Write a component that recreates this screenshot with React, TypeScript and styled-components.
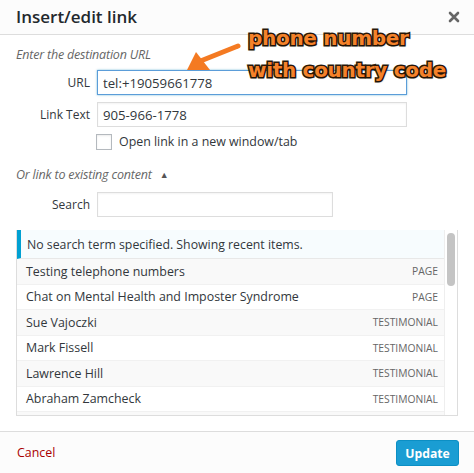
import styled, { createGlobalStyle } from "styled-components";

const GlobalStyle = createGlobalStyle`
  html, body {
    margin: 0;
    padding: 0;
    background: #fff;
  }
  body {
    font-family: "Open Sans", "Liberation Sans", sans-serif;
    color: #32373c;
  }
  * {
    box-sizing: border-box;
  }
`;

const Dialog = styled.div`
  position: relative;
  width: 474px;
  height: 473px;
  display: flex;
  flex-direction: column;
  background: #fff;
  overflow: hidden;
`;

const Header = styled.div`
  height: 35px;
  flex: none;
  display: flex;
  align-items: center;
  justify-content: space-between;
  padding: 0 14px 0 16px;
  background: #fcfcfc;
  border-bottom: 1px solid #dddddd;
`;

const Title = styled.h1`
  margin: 0;
  font-size: 17px;
  font-weight: 600;
  color: #23282d;
  line-height: 34px;
`;

const CloseButton = styled.button`
  border: 0;
  background: none;
  padding: 0;
  width: 12px;
  height: 12px;
  display: flex;
  color: #666;
`;

const Body = styled.div`
  flex: 1;
  padding: 11px 16px 0;
`;

const Hint = styled.p`
  margin: 0 0 6px;
  font-size: 12.5px;
  line-height: 18px;
  font-style: italic;
  letter-spacing: -0.2px;
  color: #666;
`;

const FieldRow = styled.div<{ $gap?: number }>`
  display: flex;
  align-items: center;
  gap: 7px;
  margin-bottom: ${({ $gap }) => $gap ?? 7}px;
`;

const Label = styled.label`
  width: 74px;
  text-align: right;
  font-size: 12px;
  color: #32373c;
`;

const TextInput = styled.input<{ $width: number; $focus?: boolean }>`
  width: ${({ $width }) => $width}px;
  height: 25px;
  padding: 0 5px;
  font-family: "Open Sans", "Liberation Sans", sans-serif;
  font-size: 13.2px;
  color: #32373c;
  background: #fff;
  border: 1px solid ${({ $focus }) => ($focus ? "#5b9dd9" : "#dddddd")};
  box-shadow: ${({ $focus }) =>
    $focus ? "0 0 2px rgba(30,140,190,0.6)" : "inset 0 1px 2px rgba(0,0,0,0.05)"};
  outline: none;
`;

const CheckRow = styled.div`
  display: flex;
  align-items: center;
  gap: 7px;
  padding-left: 80px;
  margin-bottom: 16px;
`;

const Box = styled.span`
  width: 16px;
  height: 16px;
  border: 1px solid #b4b9be;
  background: #fff;
  box-shadow: inset 0 1px 2px rgba(0, 0, 0, 0.08);
`;

const CheckText = styled.span`
  font-size: 12.4px;
  color: #32373c;
`;

const Toggle = styled.p`
  margin: 0 0 8px;
  font-size: 12.5px;
  line-height: 18px;
  font-style: italic;
  letter-spacing: -0.2px;
  color: #666;
`;

const Caret = styled.span`
  font-style: normal;
  font-size: 9px;
  margin-left: 8px;
  color: #555;
  vertical-align: 1px;
`;

const Results = styled.div`
  display: flex;
  margin-top: 13px;
  height: 186px;
  border: 1px solid #dddddd;
  border-top: 0;
  background: #fff;
`;

const List = styled.ul`
  flex: 1;
  margin: 0;
  padding: 0;
  list-style: none;
  overflow: hidden;
`;

const Notice = styled.li`
  height: 29px;
  display: flex;
  align-items: center;
  padding-left: 6px;
  font-size: 12.3px;
  color: #32373c;
  background: #f7fcfe;
  border-left: 4px solid #00a0d2;
  border-bottom: 1px solid #e8e8e8;
`;

const Item = styled.li<{ $odd: boolean }>`
  height: 25.5px;
  display: flex;
  align-items: center;
  justify-content: space-between;
  padding: 0 6px 0 9px;
  background: ${({ $odd }) => ($odd ? "#f9f9f9" : "#fff")};
  border-bottom: 1px solid #f1f1f1;
`;

const ItemTitle = styled.span`
  font-size: 12.4px;
  color: #32373c;
`;

const ItemType = styled.span`
  font-size: 10.3px;
  color: #666;
  text-transform: uppercase;
`;

const Track = styled.div`
  width: 13px;
  flex: none;
  border-left: 1px solid #eeeeee;
  padding: 3px 2px 0 2px;
`;

const Thumb = styled.div`
  height: 53px;
  border-radius: 4px;
  background: #c4c4c4;
`;

const Footer = styled.div`
  height: 42px;
  flex: none;
  display: flex;
  align-items: center;
  justify-content: space-between;
  padding: 0 15px 0 17px;
  background: #fcfcfc;
  border-top: 1px solid #dddddd;
`;

const CancelLink = styled.a`
  font-size: 12.4px;
  color: #a00;
  text-decoration: none;
`;

const PrimaryButton = styled.button`
  width: 63px;
  height: 26px;
  margin-top: 1px;
  border-radius: 3px;
  border: 1px solid #0c8fc4;
  background: #1a9dd3;
  color: #fff;
  font-family: "Open Sans", "Liberation Sans", sans-serif;
  font-weight: 700;
  font-size: 12.2px;
  padding: 0;
`;

const Callout = styled.div`
  position: absolute;
  left: 248px;
  top: 22px;
  font-family: "DejaVu Sans", "Liberation Sans", sans-serif;
  font-weight: 700;
  font-size: 20px;
  line-height: 32px;
  letter-spacing: -0.3px;
  color: #f5822a;
  -webkit-text-stroke: 3px #2a1808;
  paint-order: stroke fill;
  text-shadow: 1px 1px 2px rgba(0, 0, 0, 0.35);
  white-space: nowrap;
`;

const ArrowSvg = styled.svg`
  position: absolute;
  left: 184px;
  top: 40px;
`;

const results = [
  { title: "Testing telephone numbers", type: "Page" },
  { title: "Chat on Mental Health and Imposter Syndrome", type: "Page" },
  { title: "Sue Vajoczki", type: "Testimonial" },
  { title: "Mark Fissell", type: "Testimonial" },
  { title: "Lawrence Hill", type: "Testimonial" },
  { title: "Abraham Zamcheck", type: "Testimonial" },
  { title: "", type: "" },
];

export default function App() {
  return (
    <>
      <GlobalStyle />
      <Dialog>
        <Header>
          <Title>Insert/edit link</Title>
          <CloseButton aria-label="Close">
            <svg width="12" height="12" viewBox="0 0 12 12">
              <path d="M2 2 L10 10 M10 2 L2 10" stroke="#666" strokeWidth="2.6" strokeLinecap="round" />
            </svg>
          </CloseButton>
        </Header>
        <Body>
          <Hint>Enter the destination URL</Hint>
          <FieldRow>
            <Label>URL</Label>
            <TextInput $width={310} $focus defaultValue="tel:+19059661778" />
          </FieldRow>
          <FieldRow $gap={6}>
            <Label>Link Text</Label>
            <TextInput $width={310} defaultValue="905-966-1778" />
          </FieldRow>
          <CheckRow>
            <Box />
            <CheckText>Open link in a new window/tab</CheckText>
          </CheckRow>
          <Toggle>
            Or link to existing content<Caret>▲</Caret>
          </Toggle>
          <FieldRow $gap={0}>
            <Label>Search</Label>
            <TextInput $width={236} />
          </FieldRow>
          <Results>
            <List>
              <Notice>No search term specified. Showing recent items.</Notice>
              {results.map((r, i) => (
                <Item key={i} $odd={i % 2 === 0}>
                  <ItemTitle>{r.title}</ItemTitle>
                  <ItemType>{r.type}</ItemType>
                </Item>
              ))}
            </List>
            <Track>
              <Thumb />
            </Track>
          </Results>
        </Body>
        <Footer>
          <CancelLink href="#">Cancel</CancelLink>
          <PrimaryButton>Update</PrimaryButton>
        </Footer>
        <ArrowSvg width="60" height="36" viewBox="0 0 60 36">
          <path d="M54 6 L14 22" stroke="#f47a22" strokeWidth="5" strokeLinecap="round" />
          <path d="M3 30 L12 12 L26 30 Z" fill="#f47a22" />
        </ArrowSvg>
        <Callout>
          phone number
          <br />
          with country code
        </Callout>
      </Dialog>
    </>
  );
}
